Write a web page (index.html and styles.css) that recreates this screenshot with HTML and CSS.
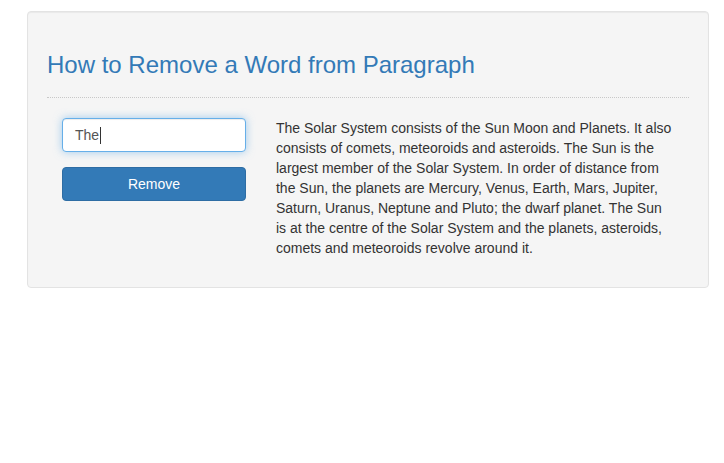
FILE: index.html
```html
<!DOCTYPE html>
<html lang="en">
<head>
  <meta charset="UTF-8">
  <meta name="viewport" content="width=device-width, initial-scale=1.0">
  <title>Remove a Word from Paragraph</title>
  <link rel="stylesheet" href="styles.css">
</head>
<body>
  <div class="container">
    <div class="well">
      <div class="page-header">
        <h3>How to Remove a Word from Paragraph</h3>
      </div>
      <div class="row">
        <div class="col-form">
          <div class="form-group">
            <div class="form-control focused">The<span class="text-caret"></span></div>
          </div>
          <button class="btn-remove">Remove</button>
        </div>
        <div class="col-text">
          <p class="paragraph">The Solar System consists of the Sun Moon and Planets. It also consists of comets, meteoroids and asteroids. The Sun is the largest member of the Solar System. In order of distance from the Sun, the planets are Mercury, Venus, Earth, Mars, Jupiter, Saturn, Uranus, Neptune and Pluto; the dwarf planet. The Sun is at the centre of the Solar System and the planets, asteroids, comets and meteoroids revolve around it.</p>
        </div>
      </div>
    </div>
  </div>
</body>
</html>
```

FILE: styles.css
```css
* {
  box-sizing: border-box;
}

body {
  margin: 0;
  font-family: "Liberation Sans", Arial, Helvetica, sans-serif;
  font-size: 14px;
  line-height: 20px;
  color: #333;
  background-color: #fff;
}

.container {
  padding: 11px 15px 0 27px;
}

.well {
  background-color: #f5f5f5;
  border: 1px solid #e3e3e3;
  border-radius: 4px;
  padding: 19px;
  box-shadow: inset 0 1px 1px rgba(0, 0, 0, 0.05);
}

.page-header {
  padding-bottom: 9px;
  margin-bottom: 20px;
  border-bottom: 1px dotted #c8c8c8;
}

.page-header h3 {
  margin: 20px 0 10px;
  font-size: 24px;
  font-weight: 500;
  line-height: 27px;
  color: #337ab7;
}

.row {
  display: flex;
}

.col-form {
  width: 33.3333%;
  padding: 0 15px;
}

.col-text {
  width: 66.6667%;
  padding: 0 15px;
}

.form-group {
  margin-bottom: 15px;
}

.form-control {
  display: flex;
  align-items: center;
  height: 34px;
  padding: 6px 12px;
  font-size: 14px;
  color: #555;
  background-color: #fff;
  border: 1px solid #66afe9;
  border-radius: 4px;
  box-shadow: inset 0 1px 1px rgba(0, 0, 0, 0.075), 0 0 8px rgba(102, 175, 233, 0.6);
}

.text-caret {
  display: inline-block;
  width: 1px;
  height: 17px;
  margin-left: 1px;
  background-color: #333;
}

.btn-remove {
  display: block;
  width: 100%;
  height: 34px;
  padding: 6px 12px;
  font-family: inherit;
  font-size: 14px;
  line-height: 20px;
  color: #fff;
  background-color: #337ab7;
  border: 1px solid #2e6da4;
  border-radius: 4px;
  cursor: pointer;
}

.paragraph {
  margin: 0 0 10px;
}
```
